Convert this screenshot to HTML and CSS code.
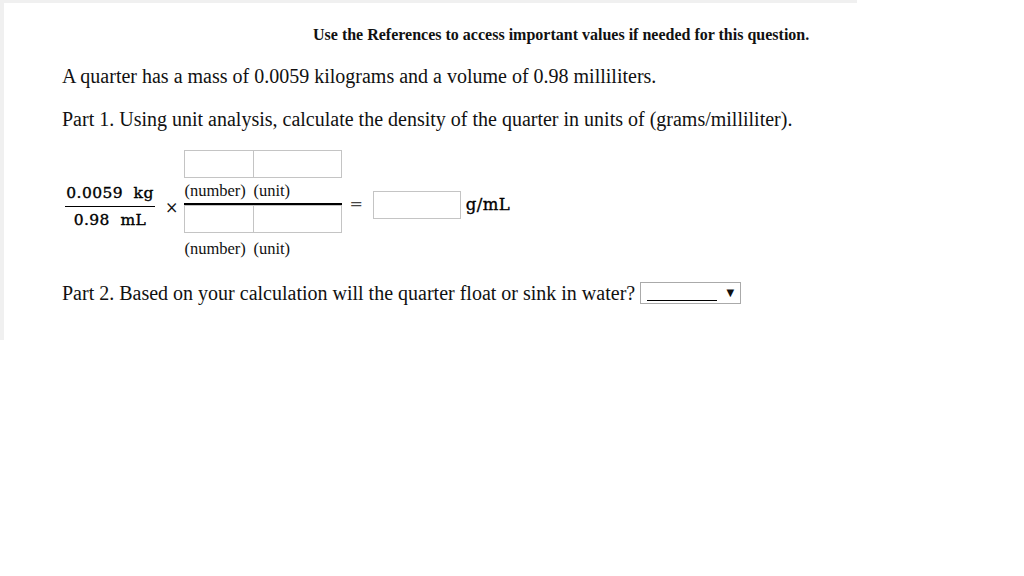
FILE: index.html
```html
<!DOCTYPE html>
<html>
  <head>
    <title>Density of a Quarter</title>
    <link rel="stylesheet" href="styles.css">
  </head>
  <body>
    <div class="frame">
      <div class="ref-note">Use the References to access important values if needed for this question.</div>

      <p class="question">A quarter has a mass of 0.0059 kilograms and a volume of 0.98 milliliters.</p>

      <p class="question">Part 1. Using unit analysis, calculate the density of the quarter in units of (grams/milliliter).</p>

      <div class="calc">
        <div class="frac">
          <div class="num">0.0059&nbsp; kg</div>
          <div class="den">0.98&nbsp; mL</div>
        </div>
        <div class="times">&times;</div>
        <div class="factor">
          <div class="box-row">
            <div class="box small"></div>
            <div class="box"></div>
          </div>
          <div class="labels top">
            <span class="label small">(number)</span>
            <span class="label">(unit)</span>
          </div>
          <div class="box-row">
            <div class="box small"></div>
            <div class="box"></div>
          </div>
          <div class="labels bottom">
            <span class="label small">(number)</span>
            <span class="label">(unit)</span>
          </div>
        </div>
        <div class="equals">=</div>
        <div class="answer"></div>
        <div class="unit">g/mL</div>
      </div>

      <div class="question part2">
        Part 2. Based on your calculation will the quarter float or sink in water?
        <div class="dropdown">
          <span class="blank"></span>
          <span class="arrow">&#9660;</span>
        </div>
      </div>
    </div>
  </body>
</html>
```

FILE: styles.css
```css
body {
  margin: 0;
  background-color: #fff;
  font-family: "Liberation Serif", "Times New Roman", serif;
  color: #111;
}
.frame {
  width: 795px;
  height: 337px;
  border-top: 3px solid #f0f0f0;
  border-left: 4px solid #f0f0f0;
  padding-left: 58px;
}
.ref-note {
  margin-top: 22px;
  margin-left: 251px;
  font-size: 16px;
  font-weight: bold;
  line-height: 20px;
}
.question {
  margin: 19px 0 0 0;
  font-size: 20px;
  line-height: 24px;
}
.calc {
  display: flex;
  align-items: center;
  margin-top: 19px;
  margin-left: 3px;
}
.frac {
  display: flex;
  flex-direction: column;
  align-items: center;
  font-family: "DejaVu Serif", serif;
  font-size: 15.5px;
  letter-spacing: 0.4px;
  -webkit-text-stroke: 0.35px #000;
  white-space: nowrap;
  color: #000;
  margin-top: 2px;
}
.num {
  width: 90px;
  text-align: center;
  padding-bottom: 3px;
  border-bottom: 1px solid #000;
  line-height: 20px;
}
.den {
  padding-top: 3px;
  line-height: 20px;
}
.times {
  font-family: "DejaVu Serif", serif;
  font-size: 16px;
  margin: 4px 6px 0 10px;
}
.factor {
  width: 158px;
}
.box-row {
  display: grid;
  grid-template-columns: 69px 89px;
}
.box {
  height: 26px;
  border: 1px solid #c4c4c4;
}
.box.small {
  border-right: none;
}
.labels {
  display: grid;
  grid-template-columns: 69px 89px;
  font-size: 16.5px;
  line-height: 26px;
  height: 25px;
}
.labels.top {
  border-bottom: 2px solid #000;
}
.labels.bottom {
  padding-top: 3px;
}
.equals {
  font-family: "DejaVu Serif", serif;
  font-size: 16px;
  color: #444;
  margin: 0 10px 0 7px;
  padding-bottom: 4px;
}
.answer {
  width: 86px;
  height: 26px;
  border: 1px solid #c4c4c4;
  margin-bottom: 2px;
}
.unit {
  font-family: "DejaVu Serif", serif;
  font-size: 16.5px;
  letter-spacing: 0.4px;
  -webkit-text-stroke: 0.35px #000;
  color: #000;
  margin-left: 5px;
  margin-bottom: 2px;
}
.part2 {
  display: flex;
  align-items: center;
  margin-top: 20px;
}
.dropdown {
  display: flex;
  align-items: center;
  justify-content: space-between;
  width: 87px;
  height: 20px;
  margin-left: 5px;
  padding: 0 6px 0 6px;
  border: 1px solid #aaa;
}
.blank {
  width: 70px;
  height: 15px;
  border-bottom: 1px solid #000;
}
.arrow {
  font-family: "DejaVu Sans", sans-serif;
  font-size: 10px;
}
```
